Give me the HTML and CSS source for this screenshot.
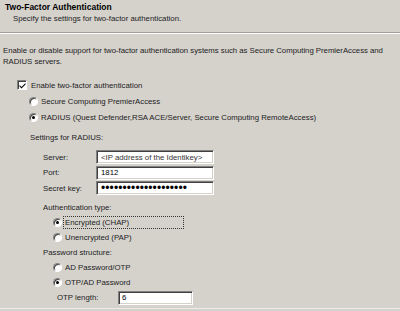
FILE: index.html
```html
<!DOCTYPE HTML>
<html>
    <head>
    <title>Two-Factor Authentication</title>
    <link rel="stylesheet" href="styles.css">
    </head>
    <body>
    <div class="page">
        <!-- header -->
        <div class="header">
            <div class="title">Two-Factor Authentication</div>
            <div class="subtitle">Specify the settings for two-factor authentication.</div>
        </div>
        <div class="sep"></div>

        <p class="intro">Enable or disable support for two-factor authentication systems such as Secure Computing PremierAccess and RADIUS servers.</p>

        <div class="check-row">
            <span class="checkbox checked">
                <svg width="7" height="7" viewBox="0 0 7 7"><path d="M0.5 3 L2.5 5 L6.5 1 L6.5 2.6 L2.5 6.6 L0.5 4.6 Z" fill="#000"/></svg>
            </span>
            <span class="label">Enable two-factor authentication</span>
        </div>

        <div class="radio-row">
            <span class="radio"></span>
            <span class="label">Secure Computing PremierAccess</span>
        </div>
        <div class="radio-row">
            <span class="radio checked"></span>
            <span class="label">RADIUS (Quest Defender,RSA ACE/Server, Secure Computing RemoteAccess)</span>
        </div>

        <div class="group-label">Settings for RADIUS:</div>

        <!-- radius fields -->
        <div class="fields">
            <div class="field">
                <span class="field-label">Server:</span>
                <span class="textbox wide"><span class="hint">&lt;IP address of the Identikey&gt;</span></span>
            </div>
            <div class="field">
                <span class="field-label">Port:</span>
                <span class="textbox wide">1812</span>
            </div>
            <div class="field">
                <span class="field-label">Secret key:</span>
                <span class="textbox wide"><span class="dots">&bull;&bull;&bull;&bull;&bull;&bull;&bull;&bull;&bull;&bull;&bull;&bull;&bull;&bull;&bull;&bull;&bull;&bull;&bull;&bull;</span></span>
            </div>
        </div>

        <div class="sub-label">Authentication type:</div>
        <div class="sub-radio">
            <span class="radio checked"></span>
            <span class="label focus">Encrypted (CHAP)</span>
        </div>
        <div class="sub-radio">
            <span class="radio"></span>
            <span class="label">Unencrypted (PAP)</span>
        </div>

        <div class="sub-label">Password structure:</div>
        <div class="sub-radio">
            <span class="radio"></span>
            <span class="label">AD Password/OTP</span>
        </div>
        <div class="sub-radio">
            <span class="radio checked"></span>
            <span class="label">OTP/AD Password</span>
        </div>

        <div class="otp-row">
            <span class="otp-label">OTP length:</span>
            <span class="textbox short">6</span>
        </div>
    </div>
    </body>
</html>
```

FILE: styles.css
```css
body {
  margin: 0;
  background-color: #d5d2cc;
  font-family: "Liberation Sans", Arial, sans-serif;
  font-size: 7.8px;
  color: #1c1c1c;
}

.page {
  height: 308px;
  border-bottom: 1px solid #ecebe7;
  overflow: hidden;
}

/* header */
.header {
  height: 32px;
  padding-top: 2px;
  box-sizing: border-box;
}

.title {
  font-weight: bold;
  font-size: 8.5px;
  line-height: 10px;
  padding-left: 5px;
  color: #000;
}

.subtitle {
  margin-top: 2px;
  line-height: 10px;
  padding-left: 13px;
}

.sep {
  border-top: 1px solid #a19e98;
  border-bottom: 1px solid #fff;
}

.intro {
  margin: 11px 0 0 3px;
  line-height: 11px;
  letter-spacing: -0.03px;
}

/* rows */
.check-row,
.radio-row,
.group-label,
.sub-label,
.sub-radio,
.otp-row,
.field {
  display: flex;
  align-items: center;
}

.check-row {
  margin-top: 10px;
  height: 16px;
  padding-left: 17px;
}

.radio-row {
  height: 16px;
  padding-left: 29px;
}

.group-label {
  margin-top: 5px;
  height: 14px;
  padding-left: 30px;
}

.fields {
  margin-top: 6px;
  padding-left: 43px;
  display: flex;
  flex-direction: column;
  gap: 1.5px;
}

.field {
  height: 14px;
}

.field-label {
  width: 53px;
}

.sub-label {
  margin-top: 5px;
  height: 15px;
  padding-left: 43px;
}

.sub-radio {
  height: 15px;
  padding-left: 53px;
}

.sub-radio + .sub-label {
  margin-top: 0;
}

.otp-row {
  height: 15px;
  padding-left: 57px;
}

.otp-label {
  width: 61px;
}

/* controls */
.checkbox {
  width: 10px;
  height: 10px;
  box-sizing: border-box;
  background-color: #fff;
  border: 1px solid;
  border-color: #808080 #fff #fff #808080;
  box-shadow: inset 1px 1px 0 #404040;
  display: flex;
  align-items: center;
  justify-content: center;
  margin-right: 2px;
}

.checkbox svg {
  margin: 1px 0 0 1px;
}

.radio {
  width: 9px;
  height: 9px;
  box-sizing: border-box;
  border-radius: 50%;
  background-color: #fff;
  border: 1px solid;
  border-color: #808080 #fff #fff #808080;
  box-shadow: inset 1px 1px 0 #404040;
  position: relative;
  margin-right: 1px;
}

.radio.checked:before {
  position: absolute;
  content: "";
  width: 3px;
  height: 3px;
  left: 2px;
  top: 2px;
  border-radius: 50%;
  background-color: #000;
}

.label {
  padding: 0 1px;
  line-height: 11px;
  border: 1px dotted transparent;
}

.focus {
  border-color: #333;
  width: 117px;
}

.textbox {
  height: 14px;
  box-sizing: border-box;
  background-color: #fff;
  border: 1px solid;
  border-color: #808080 #fff #fff #808080;
  box-shadow: inset 1px 1px 0 #404040, inset -1px -1px 0 #d5d2cc;
  padding-left: 4px;
  display: flex;
  align-items: center;
  color: #000;
}

.wide {
  width: 118px;
}

.short {
  width: 75px;
  padding-left: 3px;
}

.hint {
  color: #333;
}

.dots {
  font-size: 12px;
  letter-spacing: 0.1px;
  line-height: 10px;
}
```
